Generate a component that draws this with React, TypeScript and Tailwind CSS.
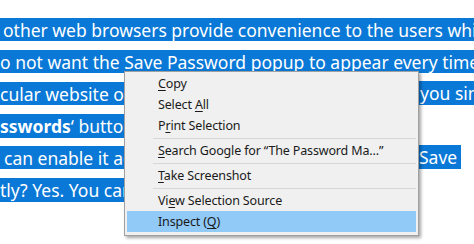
import React from 'react';

const hl = "bg-[#0a78d6] text-white inline-block h-[24px] leading-[24px]";

type Item = { pre: string; key: string; post: string; active?: boolean };

const groups: Item[][] = [
  [
    { pre: "", key: "C", post: "opy" },
    { pre: "Select ", key: "A", post: "ll" },
    { pre: "P", key: "r", post: "int Selection" },
  ],
  [{ pre: "", key: "S", post: "earch Google for \u201CThe Password Ma...\u201D" }],
  [{ pre: "", key: "T", post: "ake Screenshot" }],
  [
    { pre: "Vi", key: "e", post: "w Selection Source" },
    { pre: "Inspect (", key: "Q", post: ")", active: true },
  ],
];

const MenuRow: React.FC<{ item: Item }> = ({ item }) => (
  <div
    className={`h-[21px] leading-[21px] pl-[31px] whitespace-nowrap ${item.active ? "bg-[#91c9f7]" : ""}`}
  >
    {item.pre}
    <span className="underline underline-offset-2">{item.key}</span>
    {item.post}
  </div>
);

export default function App() {
  return (
    <div
      className="relative w-[474px] h-[244px] bg-white overflow-hidden text-[17.5px]"
      style={{ fontFamily: '"Noto Sans", "Open Sans", sans-serif' }}
    >
      <div className="pt-[17px] flex flex-col gap-[8px] whitespace-nowrap">
        <div className="h-[24px] overflow-hidden">
          <span className={`${hl} w-[474px] pl-[3px]`}>other web browsers provide convenience to the users which</span>
        </div>
        <div className="h-[24px] overflow-hidden">
          <span className={`${hl} w-[474px]`}>o not want the Save Password popup to appear every time</span>
        </div>
        <div className="h-[24px] flex overflow-hidden">
          <div className="w-[417px] shrink-0 overflow-hidden">
            <span className={`${hl} w-[417px]`}>cular website or domain, then</span>
          </div>
          <span className={`${hl} pl-[3px] flex-1`}>you simply</span>
        </div>
        <div className="h-[24px]">
          <span className={hl}>
            <b>sswords</b>{"\u2018 button"}
          </span>
        </div>
        <div className="h-[24px] flex">
          <div className="w-[417px] shrink-0 overflow-hidden">
            <span className={`${hl} w-[417px] pl-[4px]`}>can enable it again by clicking</span>
          </div>
          <span className={`${hl} pl-[2px] pr-[4px]`}>Save</span>
        </div>
        <div className="h-[24px]">
          <span className={hl}>tly? Yes. You can do it</span>
        </div>
      </div>

      <div
        className="absolute left-[124px] top-[71px] w-[295px] bg-[#f0f0f0] border border-[#a0a0a0] pt-[1px] pb-[3px] px-[2px] text-[12.5px] tracking-[-0.15px] text-[#1a1a1a] shadow-[2px_2px_3px_rgba(0,0,0,0.35)]"
        style={{ fontFamily: '"Noto Sans", "Open Sans", sans-serif' }}
      >
        {groups.map((g, gi) => (
          <div key={gi}>
            {gi > 0 && (
              <div className="h-[4px] flex items-center pl-[26px]">
                <div className="w-full h-px bg-[#d7d7d7]" />
              </div>
            )}
            {g.map((it, i) => (
              <MenuRow key={i} item={it} />
            ))}
          </div>
        ))}
      </div>
    </div>
  );
}
